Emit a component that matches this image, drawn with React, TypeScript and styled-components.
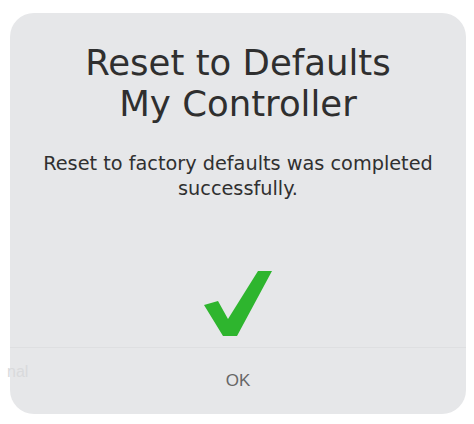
import React from "react";
import styled, { createGlobalStyle } from "styled-components";

const Global = createGlobalStyle`
  html, body { margin: 0; padding: 0; background: #ffffff; }
  body { width: 474px; height: 424px; overflow: hidden; }
`;

const Page = styled.div`
  padding: 13px 8px 10px 10px;
`;

const Card = styled.div`
  position: relative;
  width: 456px;
  height: 401px;
  box-sizing: border-box;
  background: #e6e7e9;
  border-radius: 24px;
  display: flex;
  flex-direction: column;
  align-items: center;
  font-family: "DejaVu Sans", Verdana, sans-serif;
  color: #333333;
`;

const Title = styled.h1`
  margin: 29px 0 0;
  font-weight: normal;
  font-size: 35.5px;
  line-height: 41px;
  text-align: center;
  color: #2f2f2f;
`;

const Message = styled.p`
  margin: 27px 0 0;
  width: 440px;
  font-size: 19.3px;
  line-height: 25px;
  text-align: center;
  color: #303030;
`;

const CheckWrap = styled.div`
  margin-top: 69px;
  width: 68px;
  height: 66px;
  display: flex;
`;

const Footer = styled.div`
  margin-top: auto;
  width: 100%;
  height: 67px;
  box-sizing: border-box;
  border-top: 1px solid #dedfe1;
  display: flex;
  justify-content: center;
  align-items: flex-start;
  padding-top: 23px;
`;

const OkButton = styled.button`
  background: none;
  border: none;
  padding: 0;
  font-family: "Liberation Sans", Arial, sans-serif;
  font-size: 17px;
  color: #666666;
  cursor: pointer;
`;

const Ghost = styled.span`
  position: absolute;
  left: -3px;
  bottom: 33px;
  font-family: "Liberation Sans", Arial, sans-serif;
  font-size: 16px;
  color: #d9dadc;
`;

const Check = () => (
  <svg width="68" height="66" viewBox="0 0 68 66">
    <path d="M0 35 L14 31 L24 49 L54 1 L68 1 L33 66 L19 66 Z" fill="#2eb52e" />
  </svg>
);

export default function App() {
  return (
    <>
      <Global />
      <Page>
        <Card>
          <Title>
            Reset to Defaults
            <br />
            My Controller
          </Title>
          <Message>Reset to factory defaults was completed successfully.</Message>
          <CheckWrap>
            <Check />
          </CheckWrap>
          <Ghost>nal</Ghost>
          <Footer>
            <OkButton>OK</OkButton>
          </Footer>
        </Card>
      </Page>
    </>
  );
}
